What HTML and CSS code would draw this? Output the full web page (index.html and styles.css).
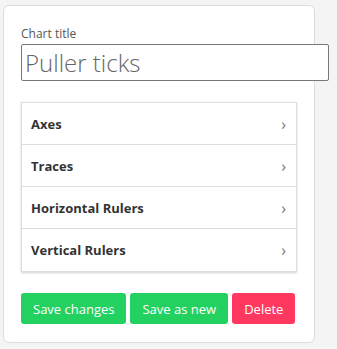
FILE: index.html
```html
<!DOCTYPE html>
<html lang="en">

<head>
    <meta charset="UTF-8" />
    <meta name="viewport" content="width=device-width, initial-scale=1.0" />
    <title>Chart settings</title>
    <link rel="stylesheet" href="styles.css">
</head>

<body>
    <div class="panel">
        <label for="title">Chart title</label>
        <input type="text" id="title" value="Puller ticks" />

        <div class="menu">
            <div class="menu-item"><span>Axes</span><span class="chevron">&#8250;</span></div>
            <div class="menu-item"><span>Traces</span><span class="chevron">&#8250;</span></div>
            <div class="menu-item"><span>Horizontal Rulers</span><span class="chevron">&#8250;</span></div>
            <div class="menu-item"><span>Vertical Rulers</span><span class="chevron">&#8250;</span></div>
        </div>

        <div class="buttons">
            <button class="btn btn-save">Save changes</button>
            <button class="btn btn-save">Save as new</button>
            <button class="btn btn-delete">Delete</button>
        </div>
    </div>
</body>

</html>
```

FILE: styles.css
```css
body {
    font-family: 'Open Sans', 'Noto Sans', sans-serif;
    margin: 0;
    padding: 5px 3px;
    background: #f4f4f4;
}

.panel {
    width: 312px;
    box-sizing: border-box;
    background: white;
    border: 1px solid #dcdcdc;
    border-radius: 6px;
    padding: 20px 17px 18px;
}

label {
    display: block;
    font-size: 12px;
    line-height: 16px;
    color: #555;
}

input {
    display: block;
    width: 308px;
    height: 37px;
    box-sizing: border-box;
    margin: 2px 0 0;
    padding: 0 4px 0 3px;
    font-family: inherit;
    font-size: 24px;
    font-weight: 300;
    color: #666;
    border: 1px solid #777;
    border-radius: 2px;
}

.menu {
    width: 276px;
    box-sizing: border-box;
    margin-top: 21px;
    border: 1px solid #ddd;
    box-shadow: 0 1px 2px rgba(0, 0, 0, 0.18);
}

.menu-item {
    display: flex;
    justify-content: space-between;
    align-items: center;
    height: 41px;
    padding: 0 10px 0 9px;
    font-size: 13px;
    font-weight: bold;
    color: #333;
    border-bottom: 1px solid #ddd;
}

.menu-item:last-child {
    border-bottom: none;
    height: 42px;
}

.chevron {
    font-size: 16px;
    font-weight: normal;
    color: #777;
}

.buttons {
    display: flex;
    gap: 4px;
    margin-top: 21px;
}

.btn {
    height: 31px;
    padding: 0 12px;
    border: none;
    border-radius: 3px;
    font-family: inherit;
    font-size: 13px;
    color: white;
}

.btn-save {
    background: #23d160;
}

.btn-delete {
    background: #ff3860;
}
```
